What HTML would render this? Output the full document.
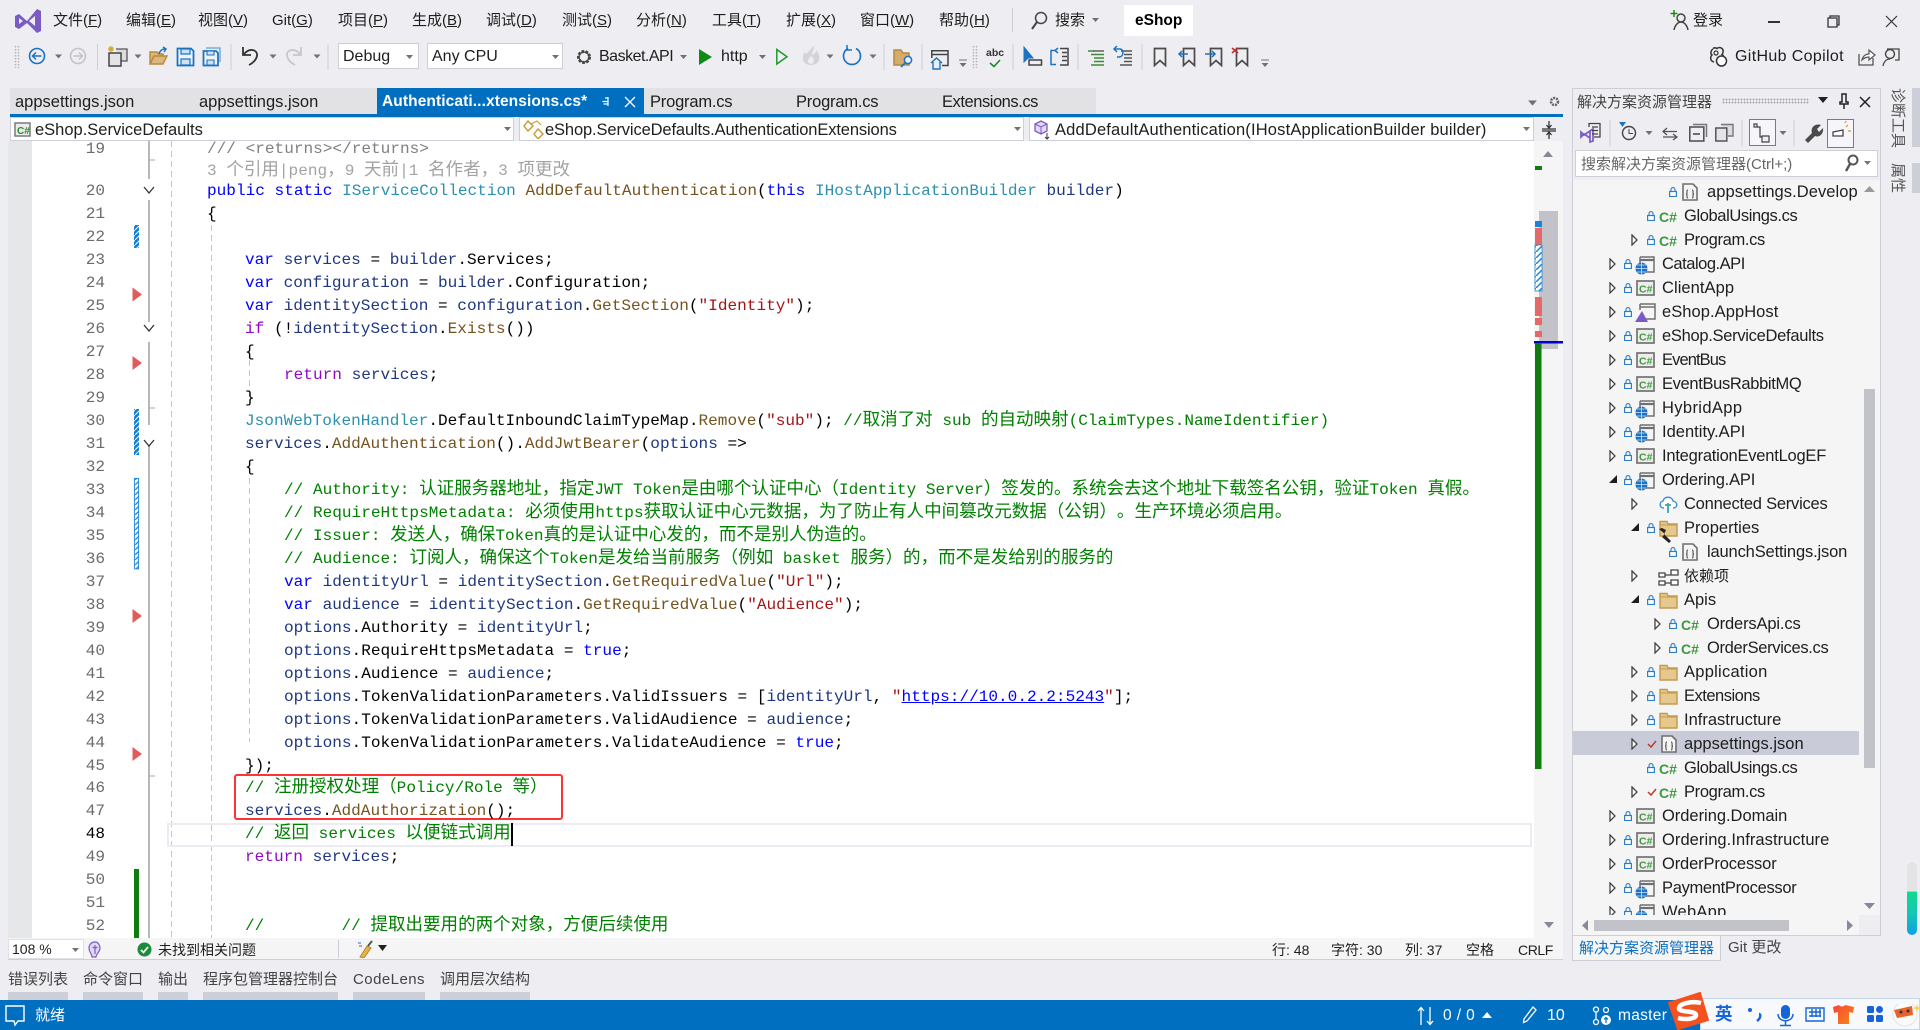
<!DOCTYPE html>
<html lang="zh"><head><meta charset="utf-8"><title>eShop</title>
<style>
html,body{margin:0;padding:0;width:1920px;height:1030px;overflow:hidden;background:#eeeef2}
body{position:relative;font-family:"Liberation Sans","Noto Sans CJK SC",sans-serif;color:#1e1e1e;text-spacing-trim:space-all}
.a{position:absolute;white-space:pre}
.b{position:absolute}
.menu{top:10px;font-size:15px;line-height:22px;color:#1e1e1e}
.tb{top:46px;font-size:16px;line-height:22px}
.tab{top:89.500px;font-size:16.500px;line-height:24px}
.dd{top:118px;font-size:16.500px;line-height:24px}
#ed{position:absolute;left:0;top:141px;width:1534px;height:797px;overflow:hidden;background:#fff}
#ed2{position:absolute;left:0;top:-141px;width:1534px;height:1030px}
.l,.n{position:absolute;white-space:pre;font-family:"Liberation Mono","Noto Sans CJK SC",monospace;font-size:16.090px;line-height:23px;height:23px;color:#000;margin-top:1px}
.n{left:60px;width:45px;text-align:right;color:#6b6b6b}
.l i{font-style:normal;font-size:17.550px;line-height:0}
.k{color:#0000ff}.t{color:#2b91af}.m{color:#74531f}.v{color:#1f377f}.s{color:#a31515}.c{color:#008000}.p{color:#8f08c4}.g{color:#808080}
.bt{top:969px;font-size:15px;line-height:22px;color:#444}
.bb{position:absolute;top:992px;height:8px;background:#ccced8}
.st{top:1005px;font-size:15px;line-height:22px;color:#fff}
.sb{top:939px;font-size:14px;line-height:22px;color:#1e1e1e}
</style></head><body>

<svg width="0" height="0" style="position:absolute">
<defs>
<symbol id="lock" viewBox="0 0 8 10" width="8" height="10"><path d="M2 4.500V2.600a2 2 0 0 1 4 0V4.500" fill="none" stroke="#2f7fc8" stroke-width="1.100"/><rect x=".6" y="4.500" width="6.800" height="5" fill="#fff" stroke="#2f7fc8" stroke-width="1.200"/></symbol>
<symbol id="arr" viewBox="0 0 7 12" width="7" height="12"><path d="M1 1L6 6L1 11Z" fill="#fff" stroke="#444" stroke-width="1.300"/></symbol>
<symbol id="exp" viewBox="0 0 8 8" width="8" height="8"><path d="M8 0V8H0Z" fill="#1e1e1e"/></symbol>
<symbol id="json" viewBox="0 0 16 18" width="16" height="18"><path d="M1 1H11L15 5V17H1Z" fill="#f4f4f4" stroke="#6f6f6f" stroke-width="1.600"/><path d="M6 7C4.500 7 5 9 5 10S4 11 4 11s1 0 1 1 -.5 3 1 3M10 7c1.500 0 1 2 1 3s1 1 1 1-1 0-1 1 .5 3-1 3" fill="none" stroke="#444" stroke-width="1" /></symbol>
<symbol id="fold" viewBox="0 0 19 17" width="19" height="17"><path d="M1 3V16H18V4H9L8 1.500H1Z" fill="#e6c78c" stroke="#c29a4e" stroke-width="1.400"/><path d="M1 5H18" stroke="#c29a4e" stroke-width="1"/></symbol>
<symbol id="web" viewBox="0 0 20 20" width="20" height="20"><path d="M5 2H19V17H9M5 2V8" fill="none" stroke="#707070" stroke-width="1.500"/><path d="M5 5H19" stroke="#707070" stroke-width="2.200"/><circle cx="6.500" cy="13.500" r="6" fill="#1b73c2"/><path d="M.5 13.500H12.500M6.500 7.500V19.500M2 10H11M2 17H11" stroke="#cfe3f5" stroke-width=".8"/></symbol>
<symbol id="proj" viewBox="0 0 19 16" width="19" height="16"><rect x="1" y="1" width="17" height="14" fill="#ececec" stroke="#7a7a7a" stroke-width="1.800"/></symbol>
<symbol id="bm" viewBox="0 0 14 20" width="14" height="20"><path d="M1.500 1H12.500V18L7 13L1.500 18Z" fill="#eeeef2" stroke="#4a4a4a" stroke-width="1.700"/></symbol>
<symbol id="car" viewBox="0 0 7 4" width="7" height="4"><path d="M0 0H7L3.500 4Z" fill="#717171"/></symbol>
</defs>
</svg>

<!-- menu -->
<svg class="b" style="left:14px;top:8px" width="28" height="26" viewBox="0 0 28 26"><path d="M1 8L5 6L13 13L23 1L27 3V23L23 25L13 15L5 21L1 19ZM5 10V16L9 13ZM21 8L15 13L21 18Z" fill="#7a5bc4"/></svg>
<div class="a menu" style="left:53px">文件(<u>F</u>)</div>
<div class="a menu" style="left:126px">编辑(<u>E</u>)</div>
<div class="a menu" style="left:198px">视图(<u>V</u>)</div>
<div class="a menu" style="left:272px">Git(<u>G</u>)</div>
<div class="a menu" style="left:338px">项目(<u>P</u>)</div>
<div class="a menu" style="left:412px">生成(<u>B</u>)</div>
<div class="a menu" style="left:486px">调试(<u>D</u>)</div>
<div class="a menu" style="left:562px">测试(<u>S</u>)</div>
<div class="a menu" style="left:636px">分析(<u>N</u>)</div>
<div class="a menu" style="left:712px">工具(<u>T</u>)</div>
<div class="a menu" style="left:786px">扩展(<u>X</u>)</div>
<div class="a menu" style="left:860px">窗口(<u>W</u>)</div>
<div class="a menu" style="left:939px">帮助(<u>H</u>)</div>
<div class="b" style="left:1012px;top:8px;width:1px;height:24px;background:#ccced8"></div>
<svg class="b" style="left:1030px;top:11px" width="18" height="20" viewBox="0 0 18 20"><circle cx="11" cy="7" r="5.500" fill="none" stroke="#444" stroke-width="1.500"/><path d="M7 11L2 18" stroke="#444" stroke-width="2"/></svg>
<div class="a menu" style="left:1055px">搜索</div>
<svg class="b" style="left:1092px;top:18px" width="7" height="4"><use href="#car"/></svg>
<div class="b" style="left:1124px;top:5px;width:69px;height:31px;background:#fff"></div>
<div class="a" style="left:1135px;top:10px;font-size:15.500px;font-weight:bold;line-height:22px;color:#000">eShop</div>
<svg class="b" style="left:1669px;top:9px" width="22" height="24" viewBox="0 0 22 24"><path d="M5 1V8M1.500 4.500H8.500" stroke="#1a8a1a" stroke-width="1.500"/><circle cx="12" cy="9" r="4" fill="none" stroke="#444" stroke-width="1.500"/><path d="M5 21c1-5 4-8 7-8s6 3 7 8" fill="none" stroke="#444" stroke-width="1.500"/></svg>
<div class="a menu" style="left:1693px">登录</div>
<div class="b" style="left:1768px;top:21px;width:12px;height:1.500px;background:#333"></div>
<svg class="b" style="left:1827px;top:15px" width="13" height="13" viewBox="0 0 13 13"><path d="M3 3V1H12V10H10M1 3H10V12H1Z" fill="none" stroke="#333" stroke-width="1.300"/></svg>
<svg class="b" style="left:1885px;top:15px" width="13" height="13"><path d="M1 1L12 12M12 1L1 12" stroke="#333" stroke-width="1.200"/></svg>

<!-- toolbar -->
<svg class="b" style="left:0;top:40px" width="1300" height="34" viewBox="0 40 1300 34">
<path d="M15.500 46V68M18.500 46V68" stroke="#b4b4b8" stroke-width="1.500" stroke-dasharray="1.500 1.500"/>
<circle cx="37" cy="56" r="7.500" fill="none" stroke="#1b73c2" stroke-width="1.600"/><path d="M41.500 56H33M36 52.500L32.500 56L36 59.500" fill="none" stroke="#1b73c2" stroke-width="1.500"/>
<use href="#car" x="55" y="54.500"/>
<circle cx="78" cy="56" r="7.500" fill="none" stroke="#c4c4c8" stroke-width="1.600"/><path d="M73.500 56H82M79 52.500L82.500 56L79 59.500" fill="none" stroke="#c4c4c8" stroke-width="1.500"/>
<path d="M97.500 44V70M231 44V70M328 44V70" stroke="#ccced8"/>
<path d="M116 49H127V61H121" fill="#dcdce0" stroke="#555" stroke-width="1.300"/><path d="M109 53H121V66H109Z" fill="#e4e4e8" stroke="#444" stroke-width="1.500"/><path d="M111 46V52M108 49H114M109 47L113 51M113 47L109 51" stroke="#d9a520" stroke-width="1.200"/>
<use href="#car" x="134.500" y="54.500"/>
<path d="M150 52H157L159 54H163V56H154L150 64ZM150 64L154 56H167L163 64Z" fill="#dcb67a" stroke="#b58a3a" stroke-width="1.400"/><path d="M159 54C160 50 163 49 165 49M163 47L166 49L164 52" stroke="#1b73c2" stroke-width="1.500" fill="none"/>
<path d="M177.500 48.500H191L193.500 51V65.500H177.500Z" fill="#eef3fa" stroke="#1b73c2" stroke-width="1.800"/><path d="M181 49H190V54H181ZM181 59H190V65H181Z" fill="#cfe1f3" stroke="#1b73c2" stroke-width="1.200"/>
<path d="M206 48H220V62" fill="none" stroke="#7ea9d4" stroke-width="1.500"/><path d="M203.500 51H216L218 53V65.500H203.500Z" fill="#eef3fa" stroke="#1b73c2" stroke-width="1.800"/><path d="M207 51H214V55H207ZM207 60H214V65H207Z" fill="#cfe1f3" stroke="#1b73c2" stroke-width="1.100"/>
<path d="M243 47V55H251M244 54C250 47 258 50 257 56C256 60 253 63 249 65" fill="none" stroke="#333" stroke-width="1.800"/>
<use href="#car" x="269.500" y="54.500"/>
<path d="M301 47V55H293M300 54C294 47 286 50 287 56C288 60 291 63 295 65" fill="none" stroke="#c8c8cc" stroke-width="1.800"/>
<use href="#car" x="313.500" y="54.500"/>
<circle cx="584" cy="57" r="5.500" fill="none" stroke="#444" stroke-width="3" stroke-dasharray="2.500 1.400"/><circle cx="584" cy="57" r="5" fill="none" stroke="#444" stroke-width="1.200"/>
<use href="#car" x="680" y="55"/>
<path d="M699 49V65L712 57Z" fill="#0e8a16"/>
<use href="#car" x="759" y="55"/>
<path d="M776.800 49.500V64L787 56.800Z" fill="none" stroke="#1f9a2a" stroke-width="1.500"/>
<path d="M814 46C815 50 811 52 812 55C815 54 816 52 816 50C819 53 820 57 819 60C818 64 814 65 811 65C806 65 802 62 803 57C803 53 806 51 806 54C808 53 810 49 814 46Z" fill="#d4d4d8"/><path d="M811 56C813 58 815 60 813 63C811 65 807 63 808 60Z" fill="#eeeef0"/>
<use href="#car" x="826.500" y="54.500"/>
<path d="M848 48.500A8.500 8.500 0 1 0 856 48.500" fill="none" stroke="#1b73c2" stroke-width="1.700"/><path d="M847 45V50H852" fill="none" stroke="#1b73c2" stroke-width="1.500"/>
<use href="#car" x="869.500" y="54.500"/>
<path d="M884 44V70M922 44V70" stroke="#ccced8"/>
<path d="M894 50H901L903 53H909V65H894Z" fill="#d6ad68" stroke="#b58a3a" stroke-width="1.500"/><circle cx="908" cy="60" r="3.600" fill="#eef" stroke="#1b73c2" stroke-width="1.500"/><path d="M905 63L901 67" stroke="#1b73c2" stroke-width="1.800"/>
<path d="M931.800 58V50.800H948V65.500H942M931.800 54.500H948" fill="none" stroke="#444" stroke-width="1.500"/><path d="M931 63L936.500 58L942 63M933 62V69H940V62" fill="#eeeef2" stroke="#1b73c2" stroke-width="1.400"/>
<path d="M959 60H967" stroke="#777"/><use href="#car" x="959.500" y="63" /><path d="M959 67.500H967" stroke="#777" stroke-width="0"/>
<path d="M973.500 46V68M976.500 46V68" stroke="#b4b4b8" stroke-width="1.500" stroke-dasharray="1.500 1.500"/>
<path d="M990 63L994 66.500L1000 60" fill="none" stroke="#1d8a24" stroke-width="1.600"/>
<path d="M1013 44V70M1078 44V70M1142 44V70" stroke="#ccced8"/>
<path d="M1024 47V62L1028 58L1033 58Z" fill="#1b73c2" stroke="#1b73c2"/><path d="M1029 60H1041.500V65H1029Z" fill="#eeeef2" stroke="#444" stroke-width="1.500"/>
<path d="M1055 50.500H1051V64.500H1056M1055 50.500L1058 48M1055 50.500L1058 53" fill="none" stroke="#1b73c2" stroke-width="1.500"/><path d="M1060 48.500H1068V65H1060M1062 52.500H1067M1062 56.500H1067M1062 60.500H1067" fill="none" stroke="#444" stroke-width="1.500"/>
<path d="M1088 51H1094M1091 54.500H1104M1094 58H1104M1094 61.500H1104M1091 65H1104" stroke="#3d8a3d" stroke-width="1.400"/><path d="M1093 51H1104" stroke="#555" stroke-width="1.400"/>
<path d="M1121 51H1132M1124 54.500H1132M1124 58H1132M1124 61.500H1132M1120 65H1132" stroke="#555" stroke-width="1.400"/><path d="M1114 49H1120C1124 49 1124 57 1119 57H1117M1117 46L1114 49L1117 52" fill="none" stroke="#1b73c2" stroke-width="1.500"/>
<use href="#bm" x="1153" y="47.500"/><use href="#bm" x="1182" y="47.500"/><use href="#bm" x="1209" y="47.500"/><use href="#bm" x="1235" y="47.500"/>
<path d="M1188 54H1179M1182 51L1179 54L1182 57" fill="none" stroke="#1b73c2" stroke-width="1.500"/>
<path d="M1205 54H1215M1212 51L1215 54L1212 57" fill="none" stroke="#1b73c2" stroke-width="1.500"/>
<path d="M1232 48L1238 53M1238 48L1232 53" stroke="#c62828" stroke-width="1.600"/>
<path d="M1261 60H1269" stroke="#777"/><use href="#car" x="1261.500" y="63"/>
</svg>
<div class="a" style="left:986px;top:47px;font-size:10.500px;font-weight:bold;line-height:12px;color:#333">abc</div>
<div class="b" style="left:338px;top:43px;width:81px;height:26px;background:#fff;border:1px solid #ccced8;box-sizing:border-box"></div>
<div class="a tb" style="left:343px">Debug</div>
<svg class="b" style="left:406px;top:55px" width="7" height="4"><use href="#car"/></svg>
<div class="b" style="left:427px;top:43px;width:136px;height:26px;background:#fff;border:1px solid #ccced8;box-sizing:border-box"></div>
<div class="a tb" style="left:432px">Any CPU</div>
<svg class="b" style="left:552px;top:55px" width="7" height="4"><use href="#car"/></svg>
<div class="a tb" style="left:599px;letter-spacing:-.5px">Basket.API</div>
<div class="a tb" style="left:721px">http</div>
<svg class="b" style="left:1708px;top:46px" width="22" height="22" viewBox="0 0 22 22"><path d="M5 2.500a3.500 3.500 0 0 1 4 0 3.500 3.500 0 0 1 5 0c2 1.500 1 5 0 6 2 1 2 3 1 4M5 3c-2 1-3 5-1 6-2 2-2 6 2 7" fill="none" stroke="#333" stroke-width="1.500"/><circle cx="13.500" cy="15" r="5" fill="#fff" stroke="#333" stroke-width="1.500"/><circle cx="8" cy="7" r="2" fill="none" stroke="#333" stroke-width="1.200"/></svg>
<div class="a tb" style="left:1735px;letter-spacing:.35px">GitHub Copilot</div>
<svg class="b" style="left:1857px;top:47px" width="44" height="20" viewBox="0 0 44 20"><path d="M2 7V18H16V11" fill="none" stroke="#555" stroke-width="1.300"/><path d="M5 13C6 8 10 7 12 7V3L18 8L12 13V10C9 10 7 11 5 13Z" fill="#fff" stroke="#555" stroke-width="1.200"/><circle cx="33" cy="7" r="4.500" fill="none" stroke="#444" stroke-width="1.400"/><path d="M26 19c1-5 4-7 7-7M30 2H42V13H38" fill="none" stroke="#444" stroke-width="1.300"/></svg>

<!-- doc tabs -->
<div class="b" style="left:10px;top:88px;width:1086px;height:26px;background:#e2e2e4"></div>
<div class="b" style="left:377px;top:88px;width:267px;height:26px;background:#006fc0"></div>
<div class="b" style="left:10px;top:114px;width:1553px;height:2.500px;background:#006fc0"></div>
<div class="a tab" style="left:15px">appsettings.json</div>
<div class="a tab" style="left:199px">appsettings.json</div>
<div class="a tab" style="left:382px;color:#fff;font-weight:bold;font-size:15.500px;letter-spacing:.1px">Authenticati...xtensions.cs*</div>
<svg class="b" style="left:601px;top:96px" width="12" height="12" viewBox="0 0 12 12"><path d="M7 1V10M4 2H7V8H2.500M7 5.500H1.500" fill="none" stroke="#fff" stroke-width="1.200"/></svg>
<svg class="b" style="left:624px;top:96px" width="12" height="12"><path d="M1 1L11 11M11 1L1 11" stroke="#fff" stroke-width="1.300"/></svg>
<div class="a tab" style="left:650px;letter-spacing:-.2px">Program.cs</div>
<div class="a tab" style="left:796px;letter-spacing:-.2px">Program.cs</div>
<div class="a tab" style="left:942px;letter-spacing:-.45px">Extensions.cs</div>
<svg class="b" style="left:1528px;top:100px" width="9" height="6" viewBox="0 0 7 4"><use href="#car"/></svg>
<svg class="b" style="left:1548px;top:95px" width="13" height="13" viewBox="0 0 13 13"><circle cx="6.500" cy="6.500" r="3.500" fill="none" stroke="#666" stroke-width="2.500" stroke-dasharray="2 1"/></svg>

<!-- nav bar -->
<div class="b" style="left:10px;top:117px;width:504px;height:24px;background:#fff;border:1px solid #ccced8;box-sizing:border-box"></div>
<div class="b" style="left:519px;top:117px;width:505px;height:24px;background:#fff;border:1px solid #ccced8;box-sizing:border-box"></div>
<div class="b" style="left:1029px;top:117px;width:505px;height:24px;background:#fff;border:1px solid #ccced8;box-sizing:border-box"></div>
<svg class="b" style="left:14px;top:122px" width="17" height="15"><rect x="1" y="1" width="15" height="13" fill="#ececec" stroke="#7a7a7a" stroke-width="1.500"/><text x="3" y="12" font-size="10" font-weight="bold" fill="#2d8a2d" font-family="Liberation Sans">C#</text></svg>
<div class="a dd" style="left:35px">eShop.ServiceDefaults</div>
<svg class="b" style="left:504px;top:127px" width="7" height="4"><use href="#car"/></svg>
<svg class="b" style="left:523px;top:119px" width="22" height="20" viewBox="0 0 22 20"><path d="M3 2L8 7L3 12L-1 7ZM13 10L18 15L13 20L9 15Z" transform="translate(2 0)" fill="#fff" stroke="#c49a30" stroke-width="1.400"/><path d="M8 5L14 2L18 6" fill="none" stroke="#c49a30"/></svg>
<div class="a dd" style="left:545px;letter-spacing:-.13px">eShop.ServiceDefaults.AuthenticationExtensions</div>
<svg class="b" style="left:1014px;top:127px" width="7" height="4"><use href="#car"/></svg>
<svg class="b" style="left:1033px;top:120px" width="20" height="20" viewBox="0 0 20 20"><path d="M8 1L14 4V11L8 14L2 11V4Z" fill="#e4d9f4" stroke="#7a5bc4" stroke-width="1.300"/><path d="M2 4L8 7L14 4M8 7V14" stroke="#7a5bc4" fill="none"/><path d="M14 13V19M12 17L14 19L16 17" fill="none" stroke="#333"/></svg>
<div class="a dd" style="left:1055px;letter-spacing:.17px">AddDefaultAuthentication(IHostApplicationBuilder builder)</div>
<svg class="b" style="left:1523px;top:127px" width="7" height="4"><use href="#car"/></svg>
<svg class="b" style="left:1541px;top:120px" width="16" height="20" viewBox="0 0 16 20"><path d="M1 9H15M1 11H15M8 1V7M5.500 5L8 8L10.500 5M8 19V13M5.500 15L8 12L10.500 15" fill="none" stroke="#333" stroke-width="1.300"/></svg>

<!-- editor -->
<div id="ed"><div id="ed2">
<div class="b" style="left:8px;top:141px;width:24px;height:797px;background:#e6e7e8"></div>
<div class="b" style="left:0;top:141px;width:8px;height:797px;background:#eeeef2"></div>
<svg class="b" style="left:0;top:0" width="300" height="1030">
<defs><pattern id="h1" width="5" height="5" patternUnits="userSpaceOnUse"><rect width="5" height="5" fill="#0f7fdc"/><path d="M-1 6L6 -1" stroke="#fff" stroke-width="1"/></pattern>
<pattern id="h2" width="5" height="5" patternUnits="userSpaceOnUse"><rect width="5" height="5" fill="#fff"/><path d="M-1 6L6 -1" stroke="#1f86dc" stroke-width="1.300"/></pattern></defs>
<path d="M149 141V179M149 200V322M149 342V425M149 445V938" stroke="#a0a0a0" stroke-width="1.500"/>
<path d="M149 160H155M149 408H155M149 776H155" stroke="#a8a8a8"/>
<path d="M171.500 141V938M211.500 225V938" stroke="#c4c4c4" stroke-dasharray="6 4"/>
<path d="M249.500 350V398M249.500 478V742" stroke="#c4c4c4" stroke-dasharray="6 4"/>
<path d="M144 187L149 193L154 187M144 325L149 331L154 325M144 440L149 446L154 440" fill="none" stroke="#333" stroke-width="1.300"/>
<rect x="134" y="225" width="5" height="23" fill="url(#h1)"/>
<rect x="134" y="409" width="5" height="46" fill="url(#h1)"/>
<rect x="134.400" y="478.400" width="4.200" height="90.500" fill="url(#h2)" stroke="#1f86dc" stroke-width=".9"/>
<rect x="134" y="869" width="5" height="69" fill="#107c10"/>
<path d="M132.500 287.500V301.500L142 294.500ZM132.500 356V370L142 363ZM132.500 609V623L142 616ZM132.500 747V761L142 754Z" fill="#e05c5c"/>
</svg>
<div class="b" style="left:167px;top:823px;width:1361px;height:20px;border:2px solid #ebebf1;box-sizing:content-box"></div>
<div class="b" style="left:234px;top:774px;width:329px;height:46px;border:2px solid #ff3333;border-radius:3px;box-sizing:border-box"></div>
<div class="b" style="left:511px;top:823px;width:1.500px;height:23px;background:#000"></div>

<div class="n" style="top:136.500px">19</div>
<div class="n" style="top:179.200px">20</div><div class="n" style="top:202.200px">21</div><div class="n" style="top:225.200px">22</div><div class="n" style="top:248.100px">23</div><div class="n" style="top:271.100px">24</div><div class="n" style="top:294.100px">25</div><div class="n" style="top:317px">26</div><div class="n" style="top:340px">27</div><div class="n" style="top:363px">28</div><div class="n" style="top:385.900px">29</div><div class="n" style="top:408.900px">30</div><div class="n" style="top:431.900px">31</div><div class="n" style="top:454.800px">32</div><div class="n" style="top:477.800px">33</div><div class="n" style="top:500.800px">34</div><div class="n" style="top:523.800px">35</div><div class="n" style="top:546.700px">36</div><div class="n" style="top:569.700px">37</div><div class="n" style="top:592.700px">38</div><div class="n" style="top:615.600px">39</div><div class="n" style="top:638.600px">40</div><div class="n" style="top:661.600px">41</div><div class="n" style="top:684.500px">42</div><div class="n" style="top:707.500px">43</div><div class="n" style="top:730.500px">44</div><div class="n" style="top:753.500px">45</div><div class="n" style="top:776.400px">46</div><div class="n" style="top:799.400px">47</div><div class="n" style="top:822.400px;color:#000">48</div><div class="n" style="top:845.300px">49</div><div class="n" style="top:868.300px">50</div><div class="n" style="top:891.300px">51</div><div class="n" style="top:914.200px">52</div>

<div class="l g" style="left:207px;top:136.500px">/// &lt;returns&gt;&lt;/returns&gt;</div>
<div class="l" style="left:207px;top:158.500px;color:#a3a3a3">3 <i>个引用</i>|peng<i>，</i>9 <i>天前</i>|1 <i>名作者，</i>3 <i>项更改</i></div>
<div class="l" style="left:207px;top:179.200px"><span class="k">public static</span> <span class="t">IServiceCollection</span> <span class="m">AddDefaultAuthentication</span>(<span class="k">this</span> <span class="t">IHostApplicationBuilder</span> <span class="v">builder</span>)</div>
<div class="l" style="left:207px;top:202.200px">{</div>
<div class="l" style="left:245px;top:248.100px"><span class="k">var</span> <span class="v">services</span> = <span class="v">builder</span>.Services;</div>
<div class="l" style="left:245px;top:271.100px"><span class="k">var</span> <span class="v">configuration</span> = <span class="v">builder</span>.Configuration;</div>
<div class="l" style="left:245px;top:294.100px"><span class="k">var</span> <span class="v">identitySection</span> = <span class="v">configuration</span>.<span class="m">GetSection</span>(<span class="s">"Identity"</span>);</div>
<div class="l" style="left:245px;top:317px"><span class="p">if</span> (!<span class="v">identitySection</span>.<span class="m">Exists</span>())</div>
<div class="l" style="left:245px;top:340px">{</div>
<div class="l" style="left:284px;top:363px"><span class="p">return</span> <span class="v">services</span>;</div>
<div class="l" style="left:245px;top:385.900px">}</div>
<div class="l" style="left:245px;top:408.900px"><span class="t">JsonWebTokenHandler</span>.DefaultInboundClaimTypeMap.<span class="m">Remove</span>(<span class="s">"sub"</span>); <span class="c">//<i>取消了对</i> sub <i>的自动映射</i>(ClaimTypes.NameIdentifier)</span></div>
<div class="l" style="left:245px;top:431.900px"><span class="v">services</span>.<span class="m">AddAuthentication</span>().<span class="m">AddJwtBearer</span>(<span class="v">options</span> =&gt;</div>
<div class="l" style="left:245px;top:454.800px">{</div>
<div class="l c" style="left:284px;top:477.800px">// Authority: <i>认证服务器地址，指定</i>JWT Token<i>是由哪个认证中心（</i>Identity Server<i>）签发的。系统会去这个地址下载签名公钥，验证</i>Token <i>真假。</i></div>
<div class="l c" style="left:284px;top:500.800px">// RequireHttpsMetadata: <i>必须使用</i>https<i>获取认证中心元数据，为了防止有人中间篡改元数据（公钥）。生产环境必须启用。</i></div>
<div class="l c" style="left:284px;top:523.800px">// Issuer: <i>发送人，确保</i>Token<i>真的是认证中心发的，而不是别人伪造的。</i></div>
<div class="l c" style="left:284px;top:546.700px">// Audience: <i>订阅人，确保这个</i>Token<i>是发给当前服务（例如</i> basket <i>服务）的，而不是发给别的服务的</i></div>
<div class="l" style="left:284px;top:569.700px"><span class="k">var</span> <span class="v">identityUrl</span> = <span class="v">identitySection</span>.<span class="m">GetRequiredValue</span>(<span class="s">"Url"</span>);</div>
<div class="l" style="left:284px;top:592.700px"><span class="k">var</span> <span class="v">audience</span> = <span class="v">identitySection</span>.<span class="m">GetRequiredValue</span>(<span class="s">"Audience"</span>);</div>
<div class="l" style="left:284px;top:615.600px"><span class="v">options</span>.Authority = <span class="v">identityUrl</span>;</div>
<div class="l" style="left:284px;top:638.600px"><span class="v">options</span>.RequireHttpsMetadata = <span class="k">true</span>;</div>
<div class="l" style="left:284px;top:661.600px"><span class="v">options</span>.Audience = <span class="v">audience</span>;</div>
<div class="l" style="left:284px;top:684.500px"><span class="v">options</span>.TokenValidationParameters.ValidIssuers = [<span class="v">identityUrl</span>, <span class="s">"</span><span class="k" style="text-decoration:underline">https://10.0.2.2:5243</span><span class="s">"</span>];</div>
<div class="l" style="left:284px;top:707.500px"><span class="v">options</span>.TokenValidationParameters.ValidAudience = <span class="v">audience</span>;</div>
<div class="l" style="left:284px;top:730.500px"><span class="v">options</span>.TokenValidationParameters.ValidateAudience = <span class="k">true</span>;</div>
<div class="l" style="left:245px;top:753.500px">});</div>
<div class="l c" style="left:245px;top:776.400px">// <i>注册授权处理（</i>Policy/Role <i>等）</i></div>
<div class="l" style="left:245px;top:799.400px"><span class="v">services</span>.<span class="m">AddAuthorization</span>();</div>
<div class="l c" style="left:245px;top:822.400px">// <i>返回</i> services <i>以便链式调用</i></div>
<div class="l" style="left:245px;top:845.300px"><span class="p">return</span> <span class="v">services</span>;</div>
<div class="l c" style="left:245px;top:914.200px">//        // <i>提取出要用的两个对象，方便后续使用</i></div>
</div></div>

<!-- editor scrollbar -->
<div class="b" style="left:1534px;top:141px;width:29px;height:797px;background:#f5f5f5"></div>
<svg class="b" style="left:1534px;top:141px" width="30" height="797" viewBox="1534 141 30 797">
<defs><pattern id="h3" width="6" height="6" patternUnits="userSpaceOnUse"><rect width="6" height="6" fill="#fff"/><path d="M-1 7L7 -1" stroke="#1f86dc" stroke-width="1.500"/></pattern></defs>
<path d="M1543 157H1553L1548 151Z" fill="#868999"/>
<rect x="1539" y="211" width="19" height="138" fill="#c2c3c9"/>
<rect x="1535" y="166" width="7" height="4" fill="#107c10"/>
<rect x="1535" y="221" width="7" height="6" fill="#1a82d8"/>
<rect x="1535" y="228" width="7" height="17" fill="#e46a6a"/>
<rect x="1535" y="245" width="7" height="46" fill="url(#h3)" stroke="#1f86dc" stroke-width=".8"/>
<rect x="1535" y="297" width="7" height="19" fill="#e46a6a"/>
<rect x="1535" y="318" width="7" height="7" fill="#e46a6a"/>
<rect x="1535" y="331" width="7" height="6" fill="#e46a6a"/>
<rect x="1534" y="341" width="29" height="2.500" fill="#0000d0"/>
<rect x="1535" y="343" width="6.500" height="426" fill="#107c10"/>
<path d="M1544 922H1554L1549 928Z" fill="#868999"/>
</svg>

<!-- editor status strip -->
<div class="b" style="left:8px;top:938px;width:1555px;height:22px;background:#f5f5f5;border-bottom:1.500px solid #ccced8;box-sizing:border-box"></div>
<div class="b" style="left:8px;top:939px;width:76px;height:20px;background:#fff;border:1px solid #e0e0e6;box-sizing:border-box"></div>
<div class="a sb" style="left:12px;top:938px">108 %</div>
<svg class="b" style="left:72px;top:948px" width="7" height="4"><use href="#car"/></svg>
<svg class="b" style="left:87px;top:941px" width="16" height="17" viewBox="0 0 16 17"><path d="M8 1C4 1 2 4 2 7C2 11 5 13 5 16H9C9 13 13 11 13 7C13 4 11 1 8 1ZM8 4V13M5.500 6C7 7 9 7 10.500 6" fill="#e3d8f2" stroke="#7a5bc4" stroke-width="1.200"/></svg>
<svg class="b" style="left:137px;top:942px" width="15" height="15"><circle cx="7.500" cy="7.500" r="7" fill="#1e8a3c"/><path d="M4 8L6.500 10.500L11 5" fill="none" stroke="#fff" stroke-width="1.700"/></svg>
<div class="a sb" style="left:158px">未找到相关问题</div>
<div class="b" style="left:338px;top:940px;width:1px;height:18px;background:#ccced8"></div>
<svg class="b" style="left:355px;top:940px" width="36" height="18" viewBox="0 0 36 18"><path d="M5 17L12 6L16 8L9 18Z" fill="#e2b54c" stroke="#b58a2a"/><path d="M13 6L17 1" stroke="#555" stroke-width="2"/><path d="M3 3H6M4 6H7" stroke="#1b73c2"/><path d="M23 5H32L27.500 11Z" fill="#222"/></svg>
<div class="a sb" style="left:1272px">行: 48</div>
<div class="a sb" style="left:1331px">字符: 30</div>
<div class="a sb" style="left:1405px">列: 37</div>
<div class="a sb" style="left:1466px">空格</div>
<div class="a sb" style="left:1518px;letter-spacing:-.4px">CRLF</div>

<!-- solution explorer -->
<div class="a" style="left:1577px;top:92px;font-size:15px;line-height:22px;color:#444">解决方案资源管理器</div>
<div class="b" style="left:1722px;top:98px;width:87px;height:6px;background-image:radial-gradient(#a8a8b0 .8px,transparent 1px);background-size:3px 3px"></div>
<svg class="b" style="left:1818px;top:97px" width="10" height="7"><path d="M0 0H10L5 6Z" fill="#222"/></svg>
<svg class="b" style="left:1839px;top:93px" width="10" height="17"><path d="M3 1H7V9H9V11H1V9H3ZM5 11V16" fill="none" stroke="#222" stroke-width="1.500"/></svg>
<svg class="b" style="left:1859px;top:96px" width="12" height="12"><path d="M1 1L11 11M11 1L1 11" stroke="#222" stroke-width="1.500"/></svg>
<div class="b" style="left:1572px;top:88px;width:309px;height:848px;border:1px solid #ccced8;border-bottom:1px solid #ccced8;box-sizing:border-box"></div>

<svg class="b" style="left:1573px;top:114px" width="300" height="36" viewBox="1573 114 300 36">
<path d="M1581 137L1584 134L1590 138V131L1584 135L1581 132ZM1590 131L1593 129V141L1590 142Z" fill="none" stroke="#7a5bc4" stroke-width="1.700"/><path d="M1589 127V123.500H1600V137H1594M1592 127H1598M1592 130.500H1598M1592 134H1598" fill="none" stroke="#444" stroke-width="1.300"/>
<path d="M1610 120V146M1742 120V146M1794 120V146" stroke="#ccced8"/>
<circle cx="1629" cy="133" r="6.500" fill="#eeeef2" stroke="#444" stroke-width="1.400"/><path d="M1629 129V133.500H1633" fill="none" stroke="#444"/><path d="M1619 122H1626L1622.500 127Z" fill="#1b73c2"/>
<use href="#car" x="1645.500" y="131"/>
<path d="M1663 131.500H1677M1667 128L1663 131.500L1667 135M1663 137H1677M1673 134L1677 137L1673 140" fill="none" stroke="#555" stroke-width="1.300"/>
<path d="M1693 124.500H1706.500V137" fill="none" stroke="#777" stroke-width="1.500"/><rect x="1689.800" y="127" width="14" height="14" fill="#eeeef2" stroke="#555" stroke-width="1.600"/><path d="M1693 134H1700" stroke="#444" stroke-width="1.500"/>
<path d="M1721 124.500H1733V136H1728" fill="#dcdce0" stroke="#777" stroke-width="1.400"/><rect x="1715.800" y="128" width="11" height="13" fill="#e4e4e8" stroke="#555" stroke-width="1.500"/>
<rect x="1749.500" y="119.500" width="26" height="26" fill="#f5f5fa" stroke="#3a8ad8"/>
<path d="M1754 124H1757V127H1754ZM1762 136H1769V142H1762ZM1757 127H1760V137H1762" fill="#eeeef2" stroke="#444" stroke-width="1.200"/>
<use href="#car" x="1779.500" y="131"/>
<path d="M1805 140L1812 133C1810 128 1815 123 1821 125L1817 129L1819 132L1823 128C1824 134 1819 138 1815 136L1808 143Z" fill="#4a4a4a"/>
<rect x="1827.500" y="119.500" width="26" height="28" fill="#f5f5fa" stroke="#3a8ad8"/>
<path d="M1833 132L1843 130V136H1833Z" fill="#fff" stroke="#444" stroke-width="1.300"/><path d="M1846 127L1848 125M1848 131L1851 131M1845 123L1846 121" stroke="#d09a30" stroke-width="1.200"/>
</svg>
<div class="b" style="left:1575px;top:150px;width:303px;height:27px;background:#fff;border:1px solid #ccced8;box-sizing:border-box"></div>
<div class="a" style="left:1581px;top:154px;font-size:15px;line-height:22px;color:#666">搜索解决方案资源管理器(Ctrl+;)</div>
<svg class="b" style="left:1842px;top:154px" width="32" height="18" viewBox="0 0 32 18"><circle cx="11" cy="6" r="4.500" fill="#fff" stroke="#555" stroke-width="2"/><path d="M8 10L4 17" stroke="#555" stroke-width="2.400"/><path d="M22 7H29L25.500 11Z" fill="#777"/></svg>

<div class="b" style="left:1573px;top:180px;width:307px;height:755px;background:#f5f5f5"></div>
<div class="b" style="left:1573px;top:731px;width:286px;height:24px;background:#c9cbd9"></div>
<!-- tree scrollbars -->
<div class="b" style="left:1864px;top:389px;width:11px;height:379px;background:#c2c3c9"></div>
<svg class="b" style="left:1864px;top:185px" width="12" height="8"><path d="M0 7H11L5.500 1Z" fill="#999"/></svg>
<svg class="b" style="left:1864px;top:902px" width="12" height="8"><path d="M0 1H11L5.500 7Z" fill="#868999"/></svg>
<div class="b" style="left:1859px;top:915px;width:21px;height:20px;background:#eeeef2"></div>
<div class="b" style="left:1594px;top:920px;width:195px;height:11px;background:#c2c3c9"></div>
<svg class="b" style="left:1581px;top:920px" width="8" height="12"><path d="M7 0V11L1 5.500Z" fill="#868999"/></svg>
<svg class="b" style="left:1846px;top:920px" width="8" height="12"><path d="M1 0V11L7 5.500Z" fill="#868999"/></svg>

<svg class="b" style="left:1573px;top:180px" width="290" height="735" viewBox="1573 180 290 735" font-family="Liberation Sans,Noto Sans CJK SC,sans-serif" font-size="16.500" fill="#1e1e1e">
<defs>
<g id="cs"><text x="0" y="13" font-size="14" font-weight="bold" fill="#3c9a3c">C#</text></g>
<g id="pj"><use href="#proj"/><text x="3" y="12.500" font-size="10.500" font-weight="bold" fill="#3c9a3c">C#</text></g>
</defs>
<use href="#lock" x="1669" y="187"/><use href="#json" x="1682" y="183"/><text x="1707" y="197" textLength="150.700">appsettings.Develop</text>
<use href="#lock" x="1647" y="211"/><use href="#cs" x="1659" y="209"/><text x="1684" y="221" textLength="113.700">GlobalUsings.cs</text>
<use href="#arr" x="1631" y="234"/><use href="#lock" x="1647" y="235"/><use href="#cs" x="1659" y="233"/><text x="1684" y="245" textLength="81.300">Program.cs</text>
<use href="#arr" x="1609" y="258"/><use href="#lock" x="1624" y="259"/><use href="#web" x="1635" y="255"/><text x="1662" y="269" textLength="83.300">Catalog.API</text>
<use href="#arr" x="1609" y="282"/><use href="#lock" x="1624" y="283"/><use href="#pj" x="1636" y="280"/><text x="1662" y="293" textLength="72">ClientApp</text>
<use href="#arr" x="1609" y="306"/><use href="#lock" x="1624" y="307"/><path d="M1640 304H1655V319H1646M1640 304V310M1640 307H1655" fill="none" stroke="#707070" stroke-width="1.500"/><path d="M1642 311L1648 322H1635Z" fill="#7a5bc4"/><text x="1662" y="317" textLength="116.300">eShop.AppHost</text>
<use href="#arr" x="1609" y="330"/><use href="#lock" x="1624" y="331"/><use href="#pj" x="1636" y="328"/><text x="1662" y="341" textLength="162">eShop.ServiceDefaults</text>
<use href="#arr" x="1609" y="354"/><use href="#lock" x="1624" y="355"/><use href="#pj" x="1636" y="352"/><text x="1662" y="365" textLength="64.300">EventBus</text>
<use href="#arr" x="1609" y="378"/><use href="#lock" x="1624" y="379"/><use href="#pj" x="1636" y="376"/><text x="1662" y="389" textLength="139.700">EventBusRabbitMQ</text>
<use href="#arr" x="1609" y="402"/><use href="#lock" x="1624" y="403"/><use href="#web" x="1635" y="399"/><text x="1662" y="413" textLength="80">HybridApp</text>
<use href="#arr" x="1609" y="426"/><use href="#lock" x="1624" y="427"/><use href="#web" x="1635" y="423"/><text x="1662" y="437" textLength="83.300">Identity.API</text>
<use href="#arr" x="1609" y="450"/><use href="#lock" x="1624" y="451"/><use href="#pj" x="1636" y="448"/><text x="1662" y="461" textLength="164.300">IntegrationEventLogEF</text>
<use href="#exp" x="1609" y="475"/><use href="#lock" x="1624" y="475"/><use href="#web" x="1635" y="471"/><text x="1662" y="485" textLength="93.300">Ordering.API</text>
<use href="#arr" x="1631" y="498"/><path d="M1664 508C1659 508 1659 502 1663 501C1664 496 1672 496 1673 501C1678 502 1678 508 1673 508" fill="#fff" stroke="#3a8ad8" stroke-width="1.400"/><path d="M1668 503V513M1665 505H1671" stroke="#3aa8a8" stroke-width="1.800"/><text x="1684" y="509" textLength="143.700">Connected Services</text>
<use href="#exp" x="1631" y="523"/><use href="#lock" x="1647" y="523"/><use href="#fold" x="1659" y="520"/><path d="M1659 529L1665 534L1662 537L1669 543L1671 541L1664 534L1666 530L1662 528Z" fill="#222"/><text x="1684" y="533" textLength="75.300">Properties</text>
<use href="#lock" x="1669" y="547"/><use href="#json" x="1682" y="543"/><text x="1707" y="557" textLength="140.300">launchSettings.json</text>
<use href="#arr" x="1631" y="570"/><path d="M1659 573H1665V577H1659ZM1659 581H1665V585H1659ZM1671 570H1678V575H1671ZM1671 580H1678V585H1671ZM1665 575H1671M1665 583H1671" fill="#fff" stroke="#444" stroke-width="1.300"/><text x="1684" y="581" font-size="15">依赖项</text>
<use href="#exp" x="1631" y="595"/><use href="#lock" x="1647" y="595"/><use href="#fold" x="1659" y="592"/><text x="1684" y="605">Apis</text>
<use href="#arr" x="1654" y="618"/><use href="#lock" x="1669" y="619"/><use href="#cs" x="1681" y="617"/><text x="1707" y="629" textLength="93.700">OrdersApi.cs</text>
<use href="#arr" x="1654" y="642"/><use href="#lock" x="1669" y="643"/><use href="#cs" x="1681" y="641"/><text x="1707" y="653" textLength="121.700">OrderServices.cs</text>
<use href="#arr" x="1631" y="666"/><use href="#lock" x="1647" y="667"/><use href="#fold" x="1659" y="664"/><text x="1684" y="677" textLength="83.300">Application</text>
<use href="#arr" x="1631" y="690"/><use href="#lock" x="1647" y="691"/><use href="#fold" x="1659" y="688"/><text x="1684" y="701" textLength="76.300">Extensions</text>
<use href="#arr" x="1631" y="714"/><use href="#lock" x="1647" y="715"/><use href="#fold" x="1659" y="712"/><text x="1684" y="725" textLength="97.300">Infrastructure</text>
<use href="#arr" x="1631" y="738"/><path d="M1648 744L1651 747L1656 741" fill="none" stroke="#c0392b" stroke-width="1.500"/><use href="#json" x="1661" y="735"/><text x="1684" y="749" textLength="119.700">appsettings.json</text>
<use href="#lock" x="1647" y="763"/><use href="#cs" x="1659" y="761"/><text x="1684" y="773" textLength="113.700">GlobalUsings.cs</text>
<use href="#arr" x="1631" y="786"/><path d="M1648 792L1651 795L1656 789" fill="none" stroke="#c0392b" stroke-width="1.500"/><use href="#cs" x="1659" y="785"/><text x="1684" y="797" textLength="81.300">Program.cs</text>
<use href="#arr" x="1609" y="810"/><use href="#lock" x="1624" y="811"/><use href="#pj" x="1636" y="808"/><text x="1662" y="821" textLength="125.300">Ordering.Domain</text>
<use href="#arr" x="1609" y="834"/><use href="#lock" x="1624" y="835"/><use href="#pj" x="1636" y="832"/><text x="1662" y="845" textLength="167.300">Ordering.Infrastructure</text>
<use href="#arr" x="1609" y="858"/><use href="#lock" x="1624" y="859"/><use href="#pj" x="1636" y="856"/><text x="1662" y="869" textLength="114.700">OrderProcessor</text>
<use href="#arr" x="1609" y="882"/><use href="#lock" x="1624" y="883"/><use href="#web" x="1635" y="879"/><text x="1662" y="893" textLength="134.700">PaymentProcessor</text>
<use href="#arr" x="1609" y="906"/><use href="#lock" x="1624" y="907"/><use href="#web" x="1635" y="903"/><text x="1662" y="917" textLength="64.300">WebApp</text>
</svg>

<!-- SE bottom tabs -->
<div class="b" style="left:1572px;top:936px;width:149px;height:25px;background:#f5f5f5;border:1px solid #ccced8;border-top:none;box-sizing:border-box"></div>
<div class="a" style="left:1579px;top:938px;font-size:15px;line-height:22px;color:#0e70c0">解决方案资源管理器</div>
<div class="a" style="left:1728px;top:937px;font-size:15px;line-height:22px;color:#444">Git 更改</div>

<!-- right side tabs -->
<div class="a" style="left:1889px;top:88px;font-size:15px;line-height:16px;color:#555;writing-mode:vertical-rl;text-orientation:sideways">诊断工具</div>
<div class="a" style="left:1889px;top:163px;font-size:15px;line-height:16px;color:#555;writing-mode:vertical-rl;text-orientation:sideways">属性</div>
<div class="b" style="left:1912px;top:88px;width:8px;height:59px;background:#ccced8"></div>
<div class="b" style="left:1912px;top:163px;width:8px;height:30px;background:#ccced8"></div>
<div class="b" style="left:1907px;top:862px;width:10px;height:73px;border-radius:5px;background:linear-gradient(#e4e4e6 0,#e4e4e6 40%,#12d98e 41%,#12c7b4 70%,#109fe8 100%)"></div>

<!-- bottom tool tabs -->
<div class="a bt" style="left:8px">错误列表</div><div class="bb" style="left:8px;width:60px"></div>
<div class="a bt" style="left:83px">命令窗口</div><div class="bb" style="left:83px;width:60px"></div>
<div class="a bt" style="left:158px">输出</div><div class="bb" style="left:158px;width:30px"></div>
<div class="a bt" style="left:203px">程序包管理器控制台</div><div class="bb" style="left:203px;width:135px"></div>
<div class="a bt" style="left:353px;letter-spacing:.45px">CodeLens</div><div class="bb" style="left:353px;width:72px"></div>
<div class="a bt" style="left:440px">调用层次结构</div><div class="bb" style="left:440px;width:90px"></div>

<!-- status bar -->
<div class="b" style="left:0;top:1000px;width:1920px;height:30px;background:#006fc0"></div>
<svg class="b" style="left:4px;top:1004px" width="22" height="24" viewBox="0 0 22 24"><path d="M2 2H20V17H14L11 21L10 17H2Z" fill="none" stroke="#fff" stroke-width="1.400"/></svg>
<div class="a st" style="left:35px">就绪</div>
<svg class="b" style="left:1416px;top:1006px" width="20" height="20" viewBox="0 0 20 20"><path d="M5 19V2M2 5L5 1.500L8 5M14 1V18M11 15L14 18.500L17 15" fill="none" stroke="#fff" stroke-width="1.300"/></svg>
<div class="a st" style="left:1443px;font-size:15.500px;letter-spacing:.4px">0 / 0</div>
<svg class="b" style="left:1482px;top:1012px" width="10" height="6"><path d="M0 6H10L5 0Z" fill="#fff"/></svg>
<svg class="b" style="left:1522px;top:1006px" width="16" height="18" viewBox="0 0 16 18"><path d="M11 1L14 4L5 15L1.500 16.500L2 13Z" fill="none" stroke="#fff" stroke-width="1.300"/></svg>
<div class="a st" style="left:1547px;font-size:16px">10</div>
<svg class="b" style="left:1592px;top:1006px" width="20" height="20" viewBox="0 0 20 20"><circle cx="4" cy="3.500" r="2.500" fill="none" stroke="#fff" stroke-width="1.300"/><circle cx="4" cy="16" r="2.500" fill="none" stroke="#fff" stroke-width="1.300"/><path d="M4 6V13.500" stroke="#fff" stroke-width="1.300"/><circle cx="14" cy="4" r="2.500" fill="none" stroke="#fff" stroke-width="1.300"/><circle cx="14" cy="14" r="5" fill="#fff"/><path d="M14 17V11.500M12 13.500L14 11.500L16 13.500" stroke="#006fc0" fill="none" stroke-width="1.200"/></svg>
<div class="a" style="left:1618px;top:1005px;font-size:15.500px;line-height:22px;color:#fff;letter-spacing:.3px">master</div>

<!-- IME -->
<div class="b" style="left:1700px;top:998px;width:220px;height:32px;background:#f7f9fd;border:1px solid #c6d6ea;box-sizing:border-box"></div>
<svg class="b" style="left:1668px;top:992px" width="42" height="38" viewBox="0 0 42 38"><path d="M1 11L32 1L40 28L10 37Z" fill="#f4511e" stroke="#f4511e" stroke-width="2" stroke-linejoin="round"/><path d="M33 11C25 9 12 11 11 16C10 21 28 18 28 23C28 27 17 28 10 26" fill="none" stroke="#fff" stroke-width="4.500"/></svg>
<div class="a" style="left:1715px;top:1003px;font-size:17.500px;font-weight:bold;line-height:22px;color:#1565d8">英</div>
<svg class="b" style="left:1745px;top:1004px" width="180" height="24" viewBox="0 0 180 24">
<circle cx="5" cy="6" r="2" fill="#1565d8"/><path d="M14 10C16 10 16 14 12 17" fill="none" stroke="#1565d8" stroke-width="2.400"/>
<rect x="36" y="1" width="9" height="14" rx="4.500" fill="#1565d8"/><path d="M33 10C33 19 48 19 48 10M40.500 17V21M35 21.500H46" fill="none" stroke="#1565d8" stroke-width="1.500"/>
<path d="M61 4H79V17H61ZM64 8H76M64 12H76M67 5V13M71 5V13M75 5V13" fill="none" stroke="#1565d8" stroke-width="1.400"/>
<defs><linearGradient id="sh" x1="0" y1="0" x2="1" y2="1"><stop offset="0" stop-color="#f8443a"/><stop offset="1" stop-color="#f58a10"/></linearGradient></defs>
<path d="M88 3L94 1C95 3 99 3 100 1L109 3L108 9L104 8V20H93V8L89 9Z" fill="url(#sh)"/>
<rect x="122" y="2" width="7" height="7" rx="1.500" fill="#1565d8"/><rect x="131" y="2" width="7" height="7" rx="3.500" fill="#1565d8"/><rect x="122" y="11" width="7" height="7" rx="1.500" fill="#1565d8"/><rect x="131" y="11" width="7" height="7" rx="1.500" fill="#1565d8"/>
<circle cx="160" cy="10" r="12" fill="#fbfbfb" stroke="#e4e4e4"/><path d="M149 6L167 2L168 11L152 14Z" fill="#e8622c"/><circle cx="156" cy="8" r="1.500" fill="#333"/><circle cx="163" cy="7" r="1.500" fill="#333"/><path d="M172 0L173 3L176 4L173 5L172 8L171 5L168 4L171 3Z" fill="#f8d24a"/>
</svg>
</body></html>
